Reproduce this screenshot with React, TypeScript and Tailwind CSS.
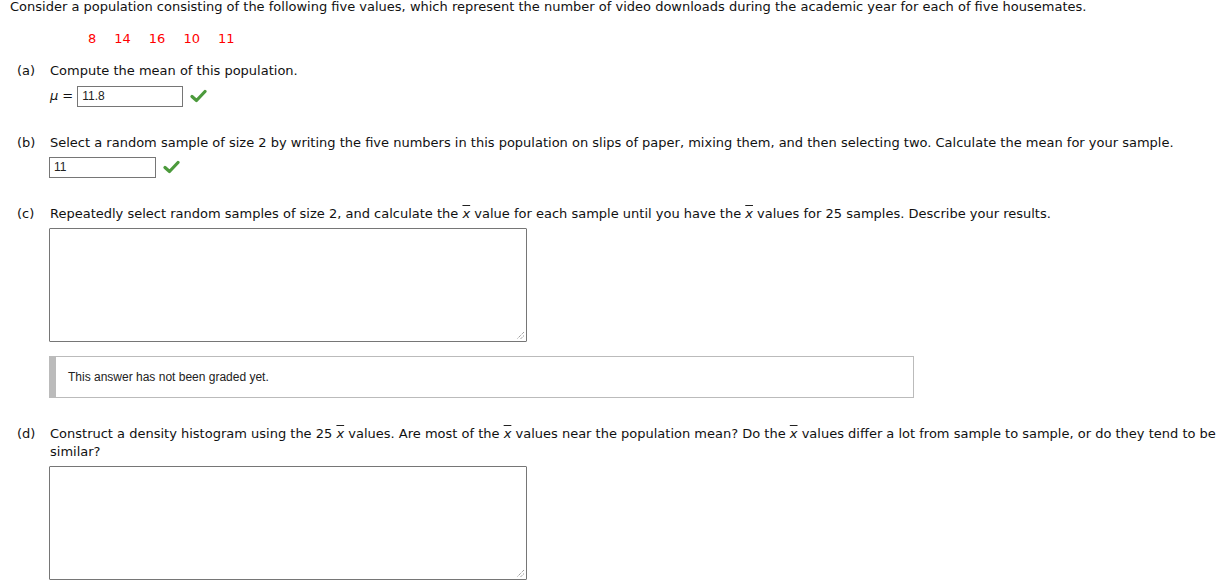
import React from 'react';

function XBar() {
  return <span className="italic overline decoration-[#222]">x</span>;
}

function Check() {
  return (
    <svg width="17" height="14" viewBox="0 0 17 14" className="ml-[7px] mt-[3px]">
      <path d="M2 7.5 L6.5 11.5 L15 2.5" fill="none" stroke="#4c9a3c" strokeWidth="3.2" strokeLinecap="round" strokeLinejoin="round" />
    </svg>
  );
}

function Part({ label, children }: { label: string; children: React.ReactNode }) {
  return (
    <div className="flex">
      <div className="w-[50px] shrink-0 pl-[17px]">({label})</div>
      <div className="flex-1">{children}</div>
    </div>
  );
}

function Field({ value, className }: { value: string; className: string }) {
  return (
    <div
      className={`h-[21px] border border-[#767676] px-[4px] text-[12px] leading-[19px] text-[#222] ${className}`}
      style={{ fontFamily: '"Liberation Sans", Arial, sans-serif' }}
    >
      {value}
    </div>
  );
}

function TextArea() {
  return (
    <div className="relative -ml-[1px] h-[114px] w-[478px] border border-[#767676] rounded-[1px] bg-white">
      <svg width="9" height="9" viewBox="0 0 9 9" className="absolute right-[1px] bottom-[1px]">
        <path d="M8 1 L1 8 M8 4.5 L4.5 8" stroke="#777" strokeWidth="1" strokeDasharray="1 1" />
      </svg>
    </div>
  );
}

export default function App() {
  return (
    <div
      className="w-[1227px] h-[583px] overflow-hidden bg-white text-[13px] leading-[18px] text-[#111]"
      style={{ fontFamily: '"DejaVu Sans", Verdana, sans-serif' }}
    >
      <div className="pl-[10px] -mt-[2px]">
        Consider a population consisting of the following five values, which represent the number of video downloads during the academic year for each of five housemates.
      </div>

      <div className="mt-[14px] pl-[88px] flex gap-[18px] text-[#f00]">
        <span>8</span>
        <span>14</span>
        <span>16</span>
        <span>10</span>
        <span>11</span>
      </div>

      <div className="mt-[14px]">
        <Part label="a">
          <div>Compute the mean of this population.</div>
          <div className="mt-[6px] flex items-start">
            <span className="italic mr-[4px] mt-[1px]">μ</span>
            <span className="mr-[4px] mt-[1px]">=</span>
            <Field value="11.8" className="w-[106px]" />
            <Check />
          </div>
        </Part>
      </div>

      <div className="mt-[27px]">
        <Part label="b">
          <div>Select a random sample of size 2 by writing the five numbers in this population on slips of paper, mixing them, and then selecting two. Calculate the mean for your sample.</div>
          <div className="mt-[5px] flex items-start -ml-[1px]">
            <Field value="11" className="w-[107px]" />
            <Check />
          </div>
        </Part>
      </div>

      <div className="mt-[27px]">
        <Part label="c">
          <div>
            Repeatedly select random samples of size 2, and calculate the <XBar /> value for each sample until you have the <XBar /> values for 25 samples. Describe your results.
          </div>
          <div className="mt-[5px]">
            <TextArea />
          </div>
          <div className="mt-[14px] -ml-[1px] flex h-[42px] w-[865px] border border-[#bbb] border-l-0">
            <div className="w-[7px] bg-[#bbb]" />
            <div
              className="flex items-center pl-[12px] text-[12px] text-[#222]"
              style={{ fontFamily: '"Liberation Sans", Arial, sans-serif' }}
            >
              This answer has not been graded yet.
            </div>
          </div>
        </Part>
      </div>

      <div className="mt-[27px]">
        <Part label="d">
          <div>
            Construct a density histogram using the 25 <XBar /> values. Are most of the <XBar /> values near the population mean? Do the <XBar /> values differ a lot from sample to sample, or do they tend to be similar?
          </div>
          <div className="mt-[5px]">
            <TextArea />
          </div>
        </Part>
      </div>
    </div>
  );
}
